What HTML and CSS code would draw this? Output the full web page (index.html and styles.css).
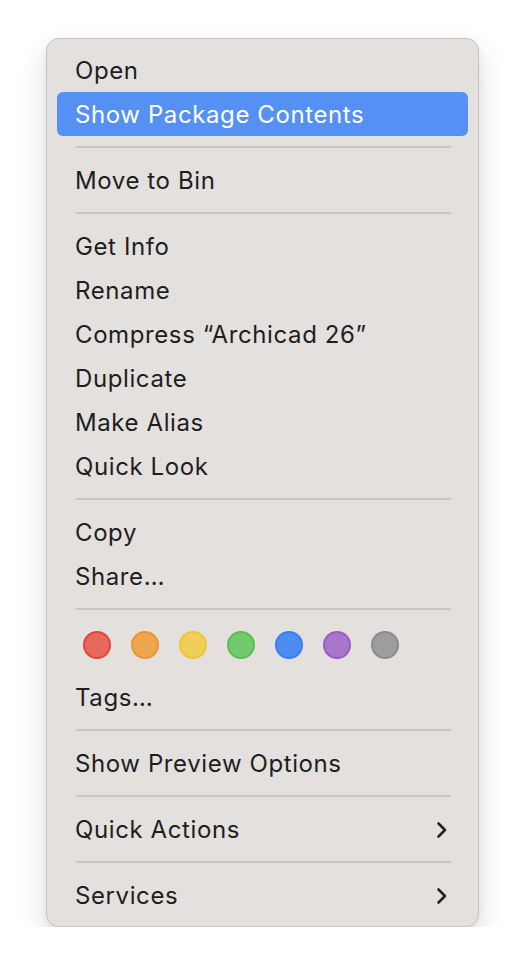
FILE: index.html
```html
<!DOCTYPE html>
<html>
<head>
<meta charset="utf-8">
<link rel="stylesheet" href="styles.css">
</head>
<body>
<div class="menu">
  <div class="item">Open</div>
  <div class="item active">Show Package Contents</div>
  <div class="sep"></div>
  <div class="item">Move to Bin</div>
  <div class="sep"></div>
  <div class="item">Get Info</div>
  <div class="item">Rename</div>
  <div class="item">Compress “Archicad 26”</div>
  <div class="item">Duplicate</div>
  <div class="item">Make Alias</div>
  <div class="item">Quick Look</div>
  <div class="sep"></div>
  <div class="item">Copy</div>
  <div class="item">Share…</div>
  <div class="sep"></div>
  <div class="tags">
    <span class="dot red"></span>
    <span class="dot orange"></span>
    <span class="dot yellow"></span>
    <span class="dot green"></span>
    <span class="dot blue"></span>
    <span class="dot purple"></span>
    <span class="dot grey"></span>
  </div>
  <div class="item">Tags…</div>
  <div class="sep"></div>
  <div class="item">Show Preview Options</div>
  <div class="sep"></div>
  <div class="item sub">Quick Actions
    <svg class="chev" width="12" height="18" viewBox="0 0 12 18"><path d="M2.5 2.5 L9 9 L2.5 15.5" fill="none" stroke="#222" stroke-width="2.6" stroke-linecap="round" stroke-linejoin="round"/></svg>
  </div>
  <div class="sep"></div>
  <div class="item sub">Services
    <svg class="chev" width="12" height="18" viewBox="0 0 12 18"><path d="M2.5 2.5 L9 9 L2.5 15.5" fill="none" stroke="#222" stroke-width="2.6" stroke-linecap="round" stroke-linejoin="round"/></svg>
  </div>
</div>
</body>
</html>
```

FILE: styles.css
```css
html, body {
  margin: 0;
  padding: 0;
  background: #ffffff;
}
body {
  padding: 38px 0 0 46px;
  font-family: Inter, "Noto Sans", sans-serif;
}
.menu {
  width: 433px;
  box-sizing: border-box;
  background: #e4e0de;
  border: 1px solid #c6c3c1;
  border-radius: 13px;
  padding: 9px 10px 9px 10px;
  box-shadow: 0 14px 30px rgba(0,0,0,0.14), 0 2px 6px rgba(0,0,0,0.06);
  display: flex;
  flex-direction: column;
}
.item {
  height: 44px;
  display: flex;
  align-items: center;
  padding-left: 18px;
  padding-right: 20px;
  padding-top: 1px;
  box-sizing: border-box;
  border-radius: 6px;
  font-size: 24px;
  color: #1e1e1e;
  letter-spacing: 0.6px;
}
.item.active {
  background: #5591f5;
  color: #ffffff;
}
.item.sub {
  justify-content: space-between;
}
.chev {
  display: block;
}
.sep {
  height: 2px;
  background: #cbc6c3;
  margin: 10px 17px 10px 19px;
}
.tags {
  display: flex;
  gap: 20px;
  padding: 11px 0 16px 26px;
}
.dot {
  width: 28px;
  height: 28px;
  box-sizing: border-box;
  border-radius: 50%;
  border: 2px solid;
}
.red { background: #e8685c; border-color: #e0463b; }
.orange { background: #eda64e; border-color: #e99535; }
.yellow { background: #efcf56; border-color: #efc43c; }
.green { background: #72c96e; border-color: #5cbd54; }
.blue { background: #4d8cf0; border-color: #3a7ef1; }
.purple { background: #a877cc; border-color: #9a5bc6; }
.grey { background: #9d9c9f; border-color: #8b8a8d; }
```
